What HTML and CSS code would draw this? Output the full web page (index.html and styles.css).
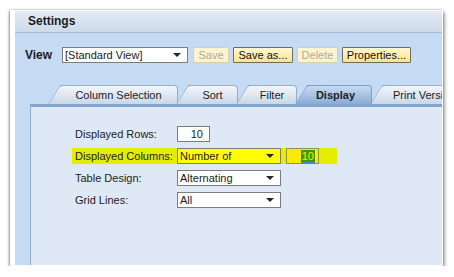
FILE: index.html
```html
<!DOCTYPE html>
<html>
<head>
<meta charset="utf-8">
<link rel="stylesheet" href="styles.css">
</head>
<body>
<div class="window">
  <div class="inner">
    <div class="titlebar">Settings</div>
    <div class="viewrow">
      <span class="view-label">View</span>
      <div class="select view-select"><span>[Standard View]</span><span class="arrow"></span></div>
      <div class="btns">
        <div class="btn disabled w-save">Save</div>
        <div class="btn w-saveas">Save as...</div>
        <div class="btn disabled w-delete">Delete</div>
        <div class="btn w-props">Properties...</div>
      </div>
    </div>
    <div class="tabs">
      <div class="tab t1">Column Selection</div>
      <div class="tab t2">Sort</div>
      <div class="tab t3">Filter</div>
      <div class="tab t4 active">Display</div>
      <div class="tab t5">Print Version</div>
    </div>
    <div class="panel">
      <div class="row">
        <span class="label">Displayed Rows:</span>
        <div class="input">10</div>
      </div>
      <div class="row hl">
        <span class="label">Displayed Columns:</span>
        <div class="select ctl sel-hl"><span>Number of</span><span class="arrow"></span></div>
        <div class="input hl-input"><span class="picked">10</span></div>
      </div>
      <div class="row">
        <span class="label">Table Design:</span>
        <div class="select ctl"><span>Alternating</span><span class="arrow"></span></div>
      </div>
      <div class="row">
        <span class="label">Grid Lines:</span>
        <div class="select ctl"><span>All</span><span class="arrow"></span></div>
      </div>
    </div>
  </div>
</div>
</body>
</html>
```
FILE: styles.css
```css
body {
  margin: 0;
  background: #ffffff;
  font-family: "Liberation Sans", Arial, sans-serif;
  font-size: 11px;
  color: #1c1c1c;
}

.window {
  margin: 10px 0 0 10px;
  width: 433px;
  height: 256px;
  box-sizing: border-box;
  background: #ffffff;
  padding: 1px 1px 1px 5px;
  box-shadow: 1px 2px 4px rgba(0, 0, 0, 0.55), -1px 0 2px rgba(0, 0, 0, 0.3);
  display: flex;
}

.inner {
  flex: 1;
  display: flex;
  flex-direction: column;
  background: #c5daf3;
  overflow: hidden;
}

.titlebar {
  height: 21px;
  border-bottom: 1px solid #a6bad3;
  background: linear-gradient(#e4ebf4, #cddaea);
  font-weight: bold;
  font-size: 12px;
  line-height: 21px;
  padding-left: 13px;
  color: #1b1b1b;
}

.viewrow {
  display: flex;
  align-items: center;
  margin-top: 14px;
  height: 16px;
  padding-left: 10px;
}

.view-label {
  width: 37px;
  font-weight: bold;
  font-size: 12px;
}

.select {
  position: relative;
  box-sizing: border-box;
  height: 16px;
  border: 1px solid #7c7c7c;
  background: #ffffff;
  padding-left: 2px;
  line-height: 14px;
}

.view-select {
  width: 126px;
}

.arrow {
  position: absolute;
  right: 6px;
  top: 5px;
  width: 0;
  height: 0;
  border-left: 4px solid transparent;
  border-right: 4px solid transparent;
  border-top: 4px solid #262626;
}

.btns {
  display: flex;
  gap: 4px;
  margin-left: 5px;
}

.btn {
  box-sizing: border-box;
  height: 16px;
  border: 1px solid #6e6c60;
  border-radius: 1px;
  background: linear-gradient(#fff8d4, #fde48a);
  line-height: 14px;
  text-align: center;
  color: #111;
}

.btn.disabled {
  border-color: #d8d0a8;
  background: #fcf4d0;
  color: #b2ab8c;
}

.w-save { width: 36px; }
.w-saveas { width: 60px; }
.w-delete { width: 41px; }
.w-props { width: 69px; }

.tabs {
  display: flex;
  margin-top: 22px;
  padding-left: 45px;
  height: 19px;
}

.tab {
  position: relative;
  z-index: 1;
  flex: none;
  box-sizing: border-box;
  height: 19px;
  margin-left: 10px;
  border-top: 1px solid #97adc8;
  border-right: 1px solid #97adc8;
  border-top-right-radius: 4px;
  background: linear-gradient(#f3f6fa, #c9d7e9);
  line-height: 18px;
  text-align: center;
  color: #222;
  white-space: nowrap;
}

.tab::before {
  content: "";
  position: absolute;
  left: -12px;
  top: -1px;
  bottom: 0;
  width: 16px;
  background: inherit;
  border-top: 1px solid #97adc8;
  border-left: 1px solid #97adc8;
  border-top-left-radius: 3px;
  transform: skewX(-32deg);
  transform-origin: bottom left;
  z-index: -1;
}

.t1 { margin-left: 0; width: 118px; z-index: 1; }
.t2 { width: 50px; z-index: 2; }
.t3 { width: 49px; z-index: 3; }
.t4 { width: 65px; padding-right: 7px; z-index: 5; }
.t5 { width: 90px; text-align: left; padding-left: 11px; z-index: 4; }

.tab.active {
  background: linear-gradient(#c8daf0, #8aacd8);
  font-weight: bold;
  border-color: #7f9cc4;
}

.tab.active::before {
  border-color: #7f9cc4;
}

.panel {
  flex: 1;
  margin-left: 15px;
  border-left: 1px solid #90afd8;
  border-top: 3px solid #84a5d0;
  background: #dfe9f5;
  padding: 19px 0 0 44px;
}

.row {
  display: flex;
  align-items: center;
  height: 16px;
  margin-bottom: 6px;
}

.label {
  width: 102px;
  flex: none;
}

.ctl {
  width: 104px;
}

.input {
  box-sizing: border-box;
  width: 33px;
  height: 16px;
  border: 1px solid #7c7c7c;
  background: #ffffff;
  text-align: right;
  padding-right: 6px;
  line-height: 14px;
}

.row.hl {
  background: #e2ed00;
  margin-left: -3px;
  padding-left: 3px;
  width: 262px;
}

.sel-hl {
  background: #ffff00;
}

.hl-input {
  margin-left: 5px;
  background: #ffe900;
  border-color: #8f8f60;
  padding-right: 3px;
}

.picked {
  display: inline-block;
  background: #3d9b00;
  color: #f2f200;
  line-height: 12px;
  padding: 0 1px;
  border-bottom: 2px solid #4a86c8;
}
```
